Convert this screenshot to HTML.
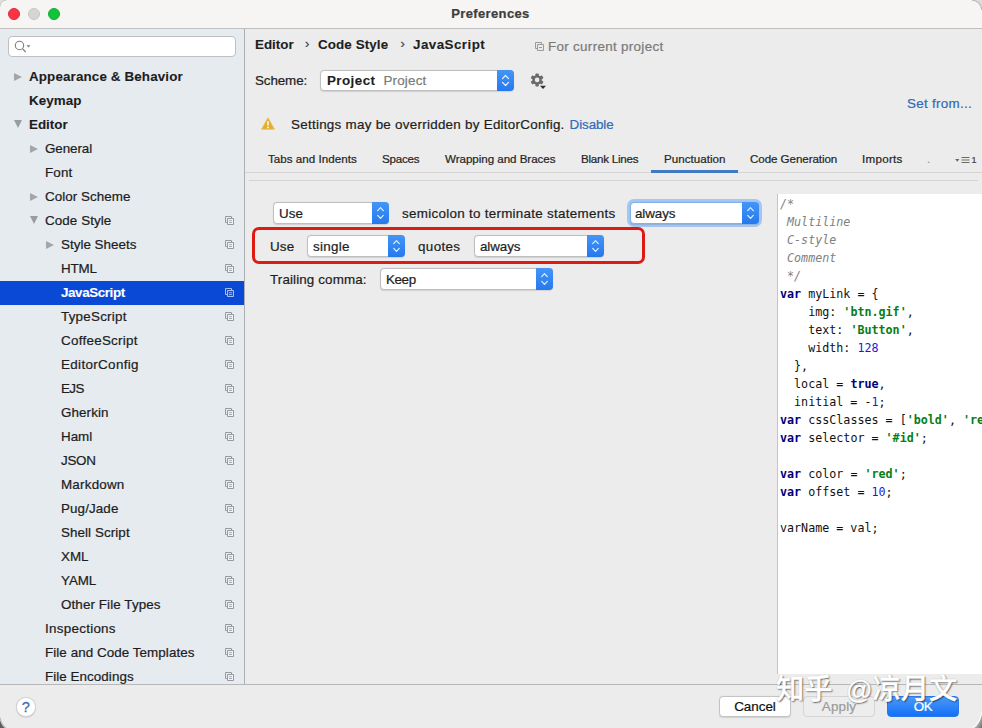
<!DOCTYPE html>
<html lang="en">
<head>
<meta charset="utf-8">
<title>Preferences</title>
<style>
*{box-sizing:border-box;margin:0;padding:0}
html,body{width:982px;height:728px;overflow:hidden;background:#ececec}
body{font-family:"Liberation Sans","Noto Sans CJK SC",sans-serif;font-size:13px;color:#1e1e1e;position:relative;-webkit-text-stroke:.22px currentColor}
.abs{position:absolute}
.t{position:absolute;white-space:nowrap;line-height:24px;height:24px}
.b,b{font-weight:bold;-webkit-text-stroke:.1px currentColor}
#titlebar{left:0;top:0;width:982px;height:29px;background:#f7f4f4;border-bottom:1px solid #bfbfbf}
#title{left:0;width:981px;top:2px;text-align:center;font-weight:bold;color:#3d3d3d;font-size:13px;letter-spacing:.35px}
.light{position:absolute;top:8px;width:12px;height:12px;border-radius:50%}
#sidebar{left:0;top:29px;width:244px;height:655px;background:#e6ebf0;overflow:hidden}
#sideline{left:244px;top:29px;width:1px;height:655px;background:#abaeb2}
#search{left:8px;top:36px;width:228px;height:21px;background:#fff;border:1px solid #bdbfc2;border-radius:4px}
.row{position:absolute;left:0;width:244px;height:24px;line-height:24px;white-space:nowrap;font-size:13.4px;color:#1d1d1d}
.row span{position:absolute;top:0}
.row.sel{background:#0a49d5;color:#fff;font-weight:bold;-webkit-text-stroke:.1px #fff}
.ar{position:absolute;width:0;height:0}
.ar.r{border-left:8px solid #a3a6a9;border-top:4.5px solid transparent;border-bottom:4.5px solid transparent}
.ar.d{border-top:8px solid #9a9da0;border-left:4.5px solid transparent;border-right:4.5px solid transparent}
.pi{position:absolute;left:224px;top:6px;width:11px;height:11px}
#bottomline{left:0;top:684px;width:982px;height:1px;background:#b7b7b7}
.btn{position:absolute;top:696px;height:21px;width:71px;border-radius:4px;text-align:center;line-height:20px;font-size:13.4px}
.combo{position:absolute;height:22px;background:#fff;border:1px solid #bfbfbf;border-radius:4px;line-height:21px;font-size:13.4px;padding-left:5px;box-shadow:0 .5px 1px rgba(0,0,0,.12)}
.combo i{position:absolute;right:-1px;top:-1px;bottom:-1px;width:17px;border-radius:0 4px 4px 0;background:linear-gradient(#4595f7,#2479ee)}
.combo i svg{position:absolute;left:0;top:0}
.link{color:#2f6db8}
#code{left:777px;top:194px;width:205px;height:480px;background:#fff;border-left:1px solid #c4c4c4;overflow:hidden}
#code pre{-webkit-text-stroke:0;position:absolute;left:2px;top:1px;font-family:"DejaVu Sans Mono","Liberation Mono",monospace;font-size:11.7px;line-height:18px;color:#111;letter-spacing:0}
#code .c{color:#808080;font-style:italic}
#code .k{color:#000080;font-weight:bold}
#code .s{color:#067d17;font-weight:bold}
#code .n{color:#1a1ad6}
.tab{position:absolute;top:147px;font-size:11.6px;line-height:24px;white-space:nowrap;color:#262626}
</style>
</head>
<body>
<!-- title bar -->
<div id="titlebar" class="abs"></div>
<div class="light" style="left:8px;background:#fc3345;border:1px solid #dc2a3c"></div>
<div class="light" style="left:28px;background:#d6d4d5;border:1px solid #c9c7c8"></div>
<div class="light" style="left:48px;background:#11c53a;border:1px solid #0fae34"></div>
<div id="title" class="t">Preferences</div>

<!-- sidebar -->
<div id="sidebar" class="abs"></div>
<div id="sideline" class="abs"></div>
<div id="search" class="abs">
<svg width="30" height="18" viewBox="0 0 30 18" style="position:absolute;left:0;top:0"><circle cx="10.5" cy="8.5" r="4.2" fill="none" stroke="#7c7c7c" stroke-width="1.1"/><path d="M13.6 11.8L16.6 15" stroke="#7c7c7c" stroke-width="1.2" fill="none"/><path d="M17.5 8.2h4l-2 2.4z" fill="#7c7c7c"/></svg>
</div>
<div id="tree">
<div class="row b" style="top:65px"><div class="ar r" style="left:14px;top:7.5px"></div><span style="left:29px;letter-spacing:0.13px">Appearance &amp; Behavior</span></div>
<div class="row b" style="top:89px"><span style="left:29px;letter-spacing:0.05px">Keymap</span></div>
<div class="row b" style="top:113px"><div class="ar d" style="left:14px;top:7px"></div><span style="left:29px">Editor</span></div>
<div class="row" style="top:137px"><div class="ar r" style="left:30px;top:7.5px"></div><span style="left:45px;letter-spacing:-0.08px">General</span></div>
<div class="row" style="top:161px"><span style="left:45px;letter-spacing:0.15px">Font</span></div>
<div class="row" style="top:185px"><div class="ar r" style="left:30px;top:7.5px"></div><span style="left:45px;letter-spacing:0.05px">Color Scheme</span></div>
<div class="row" style="top:209px"><div class="ar d" style="left:30px;top:7px"></div><span style="left:45px;letter-spacing:0.09px">Code Style</span><svg class="pi" viewBox="0 0 11 11"><path d="M1.5 1.5h6v6h-6z" fill="none" stroke="#979ba0" stroke-width="1"/><path d="M3.5 3.5h6v6h-6z" fill="#f0f3f6" stroke="#979ba0" stroke-width="1"/><path d="M5 5.7h3M5 7.5h3" stroke="#979ba0" stroke-width=".8"/></svg></div>
<div class="row" style="top:233px"><div class="ar r" style="left:46px;top:7.5px"></div><span style="left:61px;letter-spacing:0.02px">Style Sheets</span><svg class="pi" viewBox="0 0 11 11"><path d="M1.5 1.5h6v6h-6z" fill="none" stroke="#979ba0" stroke-width="1"/><path d="M3.5 3.5h6v6h-6z" fill="#f0f3f6" stroke="#979ba0" stroke-width="1"/><path d="M5 5.7h3M5 7.5h3" stroke="#979ba0" stroke-width=".8"/></svg></div>
<div class="row" style="top:257px"><span style="left:61px;letter-spacing:-0.15px">HTML</span><svg class="pi" viewBox="0 0 11 11"><path d="M1.5 1.5h6v6h-6z" fill="none" stroke="#979ba0" stroke-width="1"/><path d="M3.5 3.5h6v6h-6z" fill="#f0f3f6" stroke="#979ba0" stroke-width="1"/><path d="M5 5.7h3M5 7.5h3" stroke="#979ba0" stroke-width=".8"/></svg></div>
<div class="row sel" style="top:281px"><span style="left:61px;letter-spacing:-0.4px">JavaScript</span><svg class="pi" viewBox="0 0 11 11"><path d="M1.5 1.5h6v6h-6z" fill="none" stroke="#a9bcf0" stroke-width="1"/><path d="M3.5 3.5h6v6h-6z" fill="#1a56d8" stroke="#a9bcf0" stroke-width="1"/><path d="M5 5.7h3M5 7.5h3" stroke="#a9bcf0" stroke-width=".8"/></svg></div>
<div class="row" style="top:305px"><span style="left:61px;letter-spacing:0.24px">TypeScript</span><svg class="pi" viewBox="0 0 11 11"><path d="M1.5 1.5h6v6h-6z" fill="none" stroke="#979ba0" stroke-width="1"/><path d="M3.5 3.5h6v6h-6z" fill="#f0f3f6" stroke="#979ba0" stroke-width="1"/><path d="M5 5.7h3M5 7.5h3" stroke="#979ba0" stroke-width=".8"/></svg></div>
<div class="row" style="top:329px"><span style="left:61px;letter-spacing:0.28px">CoffeeScript</span><svg class="pi" viewBox="0 0 11 11"><path d="M1.5 1.5h6v6h-6z" fill="none" stroke="#979ba0" stroke-width="1"/><path d="M3.5 3.5h6v6h-6z" fill="#f0f3f6" stroke="#979ba0" stroke-width="1"/><path d="M5 5.7h3M5 7.5h3" stroke="#979ba0" stroke-width=".8"/></svg></div>
<div class="row" style="top:353px"><span style="left:61px;letter-spacing:0.35px">EditorConfig</span><svg class="pi" viewBox="0 0 11 11"><path d="M1.5 1.5h6v6h-6z" fill="none" stroke="#979ba0" stroke-width="1"/><path d="M3.5 3.5h6v6h-6z" fill="#f0f3f6" stroke="#979ba0" stroke-width="1"/><path d="M5 5.7h3M5 7.5h3" stroke="#979ba0" stroke-width=".8"/></svg></div>
<div class="row" style="top:377px"><span style="left:61px;letter-spacing:-0.6px">EJS</span><svg class="pi" viewBox="0 0 11 11"><path d="M1.5 1.5h6v6h-6z" fill="none" stroke="#979ba0" stroke-width="1"/><path d="M3.5 3.5h6v6h-6z" fill="#f0f3f6" stroke="#979ba0" stroke-width="1"/><path d="M5 5.7h3M5 7.5h3" stroke="#979ba0" stroke-width=".8"/></svg></div>
<div class="row" style="top:401px"><span style="left:61px;letter-spacing:0.09px">Gherkin</span><svg class="pi" viewBox="0 0 11 11"><path d="M1.5 1.5h6v6h-6z" fill="none" stroke="#979ba0" stroke-width="1"/><path d="M3.5 3.5h6v6h-6z" fill="#f0f3f6" stroke="#979ba0" stroke-width="1"/><path d="M5 5.7h3M5 7.5h3" stroke="#979ba0" stroke-width=".8"/></svg></div>
<div class="row" style="top:425px"><span style="left:61px">Haml</span><svg class="pi" viewBox="0 0 11 11"><path d="M1.5 1.5h6v6h-6z" fill="none" stroke="#979ba0" stroke-width="1"/><path d="M3.5 3.5h6v6h-6z" fill="#f0f3f6" stroke="#979ba0" stroke-width="1"/><path d="M5 5.7h3M5 7.5h3" stroke="#979ba0" stroke-width=".8"/></svg></div>
<div class="row" style="top:449px"><span style="left:61px;letter-spacing:-0.3px">JSON</span><svg class="pi" viewBox="0 0 11 11"><path d="M1.5 1.5h6v6h-6z" fill="none" stroke="#979ba0" stroke-width="1"/><path d="M3.5 3.5h6v6h-6z" fill="#f0f3f6" stroke="#979ba0" stroke-width="1"/><path d="M5 5.7h3M5 7.5h3" stroke="#979ba0" stroke-width=".8"/></svg></div>
<div class="row" style="top:473px"><span style="left:61px;letter-spacing:0.22px">Markdown</span><svg class="pi" viewBox="0 0 11 11"><path d="M1.5 1.5h6v6h-6z" fill="none" stroke="#979ba0" stroke-width="1"/><path d="M3.5 3.5h6v6h-6z" fill="#f0f3f6" stroke="#979ba0" stroke-width="1"/><path d="M5 5.7h3M5 7.5h3" stroke="#979ba0" stroke-width=".8"/></svg></div>
<div class="row" style="top:497px"><span style="left:61px;letter-spacing:0.11px">Pug/Jade</span><svg class="pi" viewBox="0 0 11 11"><path d="M1.5 1.5h6v6h-6z" fill="none" stroke="#979ba0" stroke-width="1"/><path d="M3.5 3.5h6v6h-6z" fill="#f0f3f6" stroke="#979ba0" stroke-width="1"/><path d="M5 5.7h3M5 7.5h3" stroke="#979ba0" stroke-width=".8"/></svg></div>
<div class="row" style="top:521px"><span style="left:61px;letter-spacing:0.08px">Shell Script</span><svg class="pi" viewBox="0 0 11 11"><path d="M1.5 1.5h6v6h-6z" fill="none" stroke="#979ba0" stroke-width="1"/><path d="M3.5 3.5h6v6h-6z" fill="#f0f3f6" stroke="#979ba0" stroke-width="1"/><path d="M5 5.7h3M5 7.5h3" stroke="#979ba0" stroke-width=".8"/></svg></div>
<div class="row" style="top:545px"><span style="left:61px;letter-spacing:-0.05px">XML</span><svg class="pi" viewBox="0 0 11 11"><path d="M1.5 1.5h6v6h-6z" fill="none" stroke="#979ba0" stroke-width="1"/><path d="M3.5 3.5h6v6h-6z" fill="#f0f3f6" stroke="#979ba0" stroke-width="1"/><path d="M5 5.7h3M5 7.5h3" stroke="#979ba0" stroke-width=".8"/></svg></div>
<div class="row" style="top:569px"><span style="left:61px;letter-spacing:-0.05px">YAML</span><svg class="pi" viewBox="0 0 11 11"><path d="M1.5 1.5h6v6h-6z" fill="none" stroke="#979ba0" stroke-width="1"/><path d="M3.5 3.5h6v6h-6z" fill="#f0f3f6" stroke="#979ba0" stroke-width="1"/><path d="M5 5.7h3M5 7.5h3" stroke="#979ba0" stroke-width=".8"/></svg></div>
<div class="row" style="top:593px"><span style="left:61px;letter-spacing:0.1px">Other File Types</span><svg class="pi" viewBox="0 0 11 11"><path d="M1.5 1.5h6v6h-6z" fill="none" stroke="#979ba0" stroke-width="1"/><path d="M3.5 3.5h6v6h-6z" fill="#f0f3f6" stroke="#979ba0" stroke-width="1"/><path d="M5 5.7h3M5 7.5h3" stroke="#979ba0" stroke-width=".8"/></svg></div>
<div class="row" style="top:617px"><span style="left:45px;letter-spacing:0.28px">Inspections</span><svg class="pi" viewBox="0 0 11 11"><path d="M1.5 1.5h6v6h-6z" fill="none" stroke="#979ba0" stroke-width="1"/><path d="M3.5 3.5h6v6h-6z" fill="#f0f3f6" stroke="#979ba0" stroke-width="1"/><path d="M5 5.7h3M5 7.5h3" stroke="#979ba0" stroke-width=".8"/></svg></div>
<div class="row" style="top:641px"><span style="left:45px;letter-spacing:0.07px">File and Code Templates</span><svg class="pi" viewBox="0 0 11 11"><path d="M1.5 1.5h6v6h-6z" fill="none" stroke="#979ba0" stroke-width="1"/><path d="M3.5 3.5h6v6h-6z" fill="#f0f3f6" stroke="#979ba0" stroke-width="1"/><path d="M5 5.7h3M5 7.5h3" stroke="#979ba0" stroke-width=".8"/></svg></div>
<div class="row" style="top:665px"><span style="left:45px;letter-spacing:0.06px">File Encodings</span><svg class="pi" viewBox="0 0 11 11"><path d="M1.5 1.5h6v6h-6z" fill="none" stroke="#979ba0" stroke-width="1"/><path d="M3.5 3.5h6v6h-6z" fill="#f0f3f6" stroke="#979ba0" stroke-width="1"/><path d="M5 5.7h3M5 7.5h3" stroke="#979ba0" stroke-width=".8"/></svg></div>
</div><!--/tree-->

<!-- header of right panel -->
<div class="t b" style="left:255px;top:33px;font-size:13.4px">Editor</div>
<div class="t" style="left:305px;top:32px;font-size:13px;color:#444">›</div>
<div class="t b" style="left:318px;top:33px;font-size:13.4px;letter-spacing:.1px">Code Style</div>
<div class="t" style="left:400.5px;top:32px;font-size:13px;color:#444">›</div>
<div class="t b" style="left:413px;top:33px;font-size:13.4px;letter-spacing:.45px">JavaScript</div>
<svg class="abs" style="left:535px;top:42px" width="10" height="10" viewBox="0 0 10 10"><path d="M.5 .5h6v6h-6z" fill="none" stroke="#9a9a9a"/><path d="M2.5 2.5h6v6h-6z" fill="#ececec" stroke="#9a9a9a"/><path d="M4 5.5h3" stroke="#9a9a9a"/></svg>
<div class="t" style="left:548px;top:35px;color:#7a7a7a;font-size:13.4px;letter-spacing:.32px">For current project</div>

<div class="t" style="left:255px;top:69px;font-size:13.4px;letter-spacing:-.1px">Scheme:</div>
<div class="combo" style="left:320px;top:70px;width:194px;height:21px;line-height:19px;padding-left:6px"><b style="letter-spacing:.43px">Project</b><span style="color:#7b7b7b;letter-spacing:.2px;margin-left:8px">Project</span><i><svg width="17" height="21" viewBox="0 0 17 21"><path d="M5.5 8.6l3-3.1 3 3.1M5.5 12.4l3 3.1 3-3.1" fill="none" stroke="#e4f3ff" stroke-width="1.25" stroke-linecap="round" stroke-linejoin="round"/></svg></i></div>
<!-- gear -->
<svg class="abs" style="left:529px;top:72px" width="20" height="18" viewBox="0 0 20 18"><g transform="translate(8.1 7.9)"><g fill="#6a6a6a"><rect x="-1.7" y="-6.5" width="3.4" height="13" rx=".7"/><rect x="-1.7" y="-6.5" width="3.4" height="13" rx=".7" transform="rotate(60)"/><rect x="-1.7" y="-6.5" width="3.4" height="13" rx=".7" transform="rotate(120)"/><circle r="4.7"/></g><circle r="2.3" fill="#ececec"/></g><path d="M11 13.8h6l-3 3.1z" fill="#2e2e2e"/></svg>

<div class="t link" style="left:907px;top:92px;font-size:13.4px;letter-spacing:.3px">Set from...</div>

<!-- warning -->
<svg class="abs" style="left:261px;top:117px" width="14" height="13" viewBox="0 0 14 13"><path d="M7 .8L13.4 12.2H.6z" fill="#e3ad2f" stroke="#efbf52" stroke-width="1" stroke-linejoin="round"/><path d="M7 4.3v4.2" stroke="#fff" stroke-width="1.5"/><circle cx="7" cy="10.4" r=".9" fill="#fff"/></svg>
<div class="t" style="left:291px;top:113px;font-size:13.4px;letter-spacing:.27px">Settings may be overridden by EditorConfig. <span class="link" style="letter-spacing:-.1px;margin-left:1px">Disable</span></div>

<!-- tabs -->
<div class="tab" style="left:268px;letter-spacing:.03px">Tabs and Indents</div>
<div class="tab" style="left:382px;letter-spacing:-.22px">Spaces</div>
<div class="tab" style="left:445px;letter-spacing:-.04px">Wrapping and Braces</div>
<div class="tab" style="left:581px;letter-spacing:-.25px">Blank Lines</div>
<div class="tab" style="left:664px;letter-spacing:.03px">Punctuation</div>
<div class="tab" style="left:750px;letter-spacing:-.07px">Code Generation</div>
<div class="tab" style="left:862px;letter-spacing:.29px">Imports</div>
<div class="tab" style="left:927px;color:#999">.</div>
<svg class="abs" style="left:954px;top:155px" width="18" height="10" viewBox="0 0 18 10"><path d="M1.2 4h4.2L3.3 6.8z" fill="#666"/><path d="M7.5 2.5h8M7.5 5h8M7.5 7.5h8" stroke="#6a6a6a" stroke-width="1"/></svg>
<div class="tab" style="left:971.5px;top:148px;font-size:9px;color:#444">1</div>
<div class="abs" style="left:245px;top:172px;width:737px;height:1px;background:#d3d3d3"></div>
<div class="abs" style="left:651px;top:170px;width:87px;height:3px;background:#4079c4"></div>
<div class="abs" style="left:249px;top:180px;width:729px;height:1px;background:#d3d3d3"></div>

<!-- punctuation panel -->
<div class="combo" style="left:273px;top:202px;width:116px;letter-spacing:.1px">Use<i><svg width="17" height="22" viewBox="0 0 17 22"><path d="M5.7 8.7l2.8-3 2.8 3M5.7 13.3l2.8 3 2.8-3" fill="none" stroke="#e4f3ff" stroke-width="1.15" stroke-linecap="round" stroke-linejoin="round"/></svg></i></div>
<div class="t" style="left:402px;top:202px;font-size:13.4px;letter-spacing:.29px">semicolon to terminate statements</div>
<div class="abs" style="left:626.5px;top:199px;width:135.5px;height:28px;border-radius:7px;background:#a3c6f3"></div>
<div class="combo" style="left:630px;top:202px;width:129px;padding-left:4px;border-color:#82b0ec;letter-spacing:-.1px">always<i><svg width="17" height="22" viewBox="0 0 17 22"><path d="M5.7 8.7l2.8-3 2.8 3M5.7 13.3l2.8 3 2.8-3" fill="none" stroke="#e4f3ff" stroke-width="1.15" stroke-linecap="round" stroke-linejoin="round"/></svg></i></div>

<div class="abs" style="left:252px;top:227px;width:393px;height:37px;border:3px solid #de1a14;border-radius:7px"></div>
<div class="t" style="left:270px;top:235px;font-size:13.4px;letter-spacing:.2px">Use</div>
<div class="combo" style="left:307px;top:235px;width:98px;letter-spacing:.28px">single<i><svg width="17" height="22" viewBox="0 0 17 22"><path d="M5.7 8.7l2.8-3 2.8 3M5.7 13.3l2.8 3 2.8-3" fill="none" stroke="#e4f3ff" stroke-width="1.15" stroke-linecap="round" stroke-linejoin="round"/></svg></i></div>
<div class="t" style="left:418px;top:235px;font-size:13.4px;letter-spacing:.37px">quotes</div>
<div class="combo" style="left:474px;top:235px;width:130px;letter-spacing:-.1px">always<i><svg width="17" height="22" viewBox="0 0 17 22"><path d="M5.7 8.7l2.8-3 2.8 3M5.7 13.3l2.8 3 2.8-3" fill="none" stroke="#e4f3ff" stroke-width="1.15" stroke-linecap="round" stroke-linejoin="round"/></svg></i></div>

<div class="t" style="left:270px;top:268px;font-size:13.4px;letter-spacing:.13px">Trailing comma:</div>
<div class="combo" style="left:380px;top:268px;width:173px;letter-spacing:-.4px">Keep<i><svg width="17" height="22" viewBox="0 0 17 22"><path d="M5.7 8.7l2.8-3 2.8 3M5.7 13.3l2.8 3 2.8-3" fill="none" stroke="#e4f3ff" stroke-width="1.15" stroke-linecap="round" stroke-linejoin="round"/></svg></i></div>

<!-- code preview -->
<div id="code" class="abs"><pre><span class="c">/*
 Multiline
 C-style
 Comment
 */</span>
<span class="k">var</span> myLink = {
    img: <span class="s">'btn.gif'</span>,
    text: <span class="s">'Button'</span>,
    width: <span class="n">128</span>
  },
  local = <span class="k">true</span>,
  initial = -<span class="n">1</span>;
<span class="k">var</span> cssClasses = [<span class="s">'bold'</span>, <span class="s">'red'</span>];
<span class="k">var</span> selector = <span class="s">'#id'</span>;

<span class="k">var</span> color = <span class="s">'red'</span>;
<span class="k">var</span> offset = <span class="n">10</span>;

varName = val;</pre></div>

<!-- bottom -->
<div id="bottomline" class="abs"></div>
<div class="abs" style="left:16px;top:697px;width:19.5px;height:19.5px;border-radius:50%;background:#fff;border:1px solid #d2d2d2;box-shadow:0 .5px 1px rgba(0,0,0,.18);text-align:center;line-height:18.5px;font-size:14.5px;color:#3b72b6;-webkit-text-stroke:.3px #3b72b6">?</div>
<div class="btn" style="left:719px;width:72px;background:#fff;border:1px solid #c4c4c4;box-shadow:0 .5px 1px rgba(0,0,0,.12);color:#111">Cancel</div>
<div class="btn" style="left:803px;width:72px;letter-spacing:.2px;background:#ededed;border:1px solid #d4d4d4;color:#9b9b9b">Apply</div>
<div class="btn" style="left:887px;width:72px;letter-spacing:-.3px;background:linear-gradient(#4b99f8,#1371f7);border:1px solid #2a79ea;color:#fff">OK</div>
<!-- watermark -->
<div class="abs" id="wm" style="left:776px;top:668.5px;font-size:28.3px;word-spacing:5.5px;letter-spacing:0;font-weight:500;-webkit-text-stroke:.45px #fff;line-height:40px;white-space:nowrap;color:#fff;text-shadow:1px 1px 1.5px rgba(0,0,0,.6),0 0 1px rgba(0,0,0,.35);font-family:'Liberation Sans','Noto Sans CJK SC',sans-serif">知乎 <span style="font-size:26px">@</span>凉月文</div>
<!-- window corners -->
<svg class="abs" style="left:0;top:0" width="8" height="8" viewBox="0 0 8 8"><path d="M0 0h6A6 6 0 0 0 0 6z" fill="#dfe2df"/><path d="M0 6.5A6.5 6.5 0 0 1 6.5 0" fill="none" stroke="#c6c9c6" stroke-width="1"/></svg>
<svg class="abs" style="left:972px;top:0" width="10" height="10" viewBox="0 0 10 10"><path d="M10 0H0.5A9.5 9.5 0 0 1 10 9.5z" fill="#dcdcdc"/><path d="M0 0.2A10 10 0 0 1 9.8 10" fill="none" stroke="#bbbbbb" stroke-width="1.1"/></svg>
<svg class="abs" style="left:0;top:716px" width="8" height="12" viewBox="0 0 8 12"><path d="M0 2.5Q1 9 5 12H0z" fill="#5e5e5e"/><path d="M0 1.5Q1.2 8.5 6 12" fill="none" stroke="#bdbdbd" stroke-width="1.2"/></svg>
<svg class="abs" style="left:970px;top:710px" width="12" height="18" viewBox="0 0 12 18"><defs><linearGradient id="cg" x1="0.4" y1="0.4" x2="1" y2="1"><stop offset="0" stop-color="#cfcfcf"/><stop offset="1" stop-color="#6e6e6e"/></linearGradient></defs><path d="M12 18H3.5Q10.5 14 12 2z" fill="url(#cg)"/><path d="M2.5 18Q10 13.5 12 1" fill="none" stroke="#fafafa" stroke-width="1.2"/></svg>
</body>
</html>
